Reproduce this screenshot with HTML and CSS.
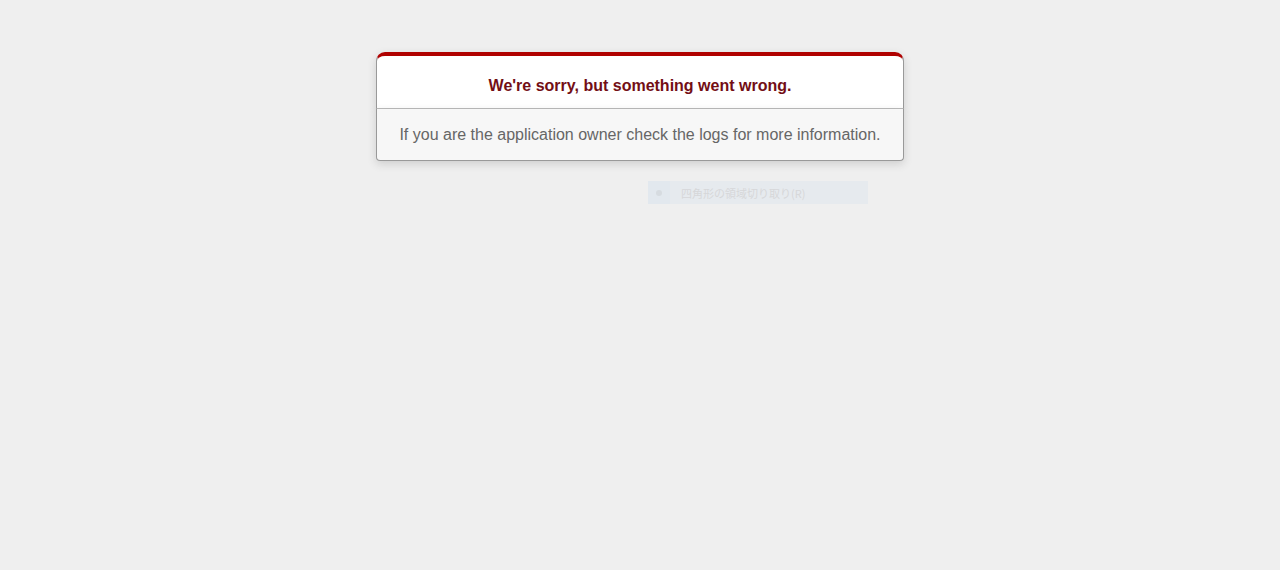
FILE: index.html
```html
<!DOCTYPE html>
<html lang="en">
<head>
<meta charset="utf-8">
<title>We're sorry, but something went wrong (500)</title>
<link rel="stylesheet" href="styles.css">
</head>
<body class="error-page">
  <div class="dialog">
    <div class="dialog-head">
      <h1 class="title">We're sorry, but something went wrong.</h1>
    </div>
    <p class="note">If you are the application owner check the logs for more information.</p>
  </div>
  <div class="ghost-menu">
    <span class="ghost-icon"><span class="ghost-dot"></span></span>
    <span class="ghost-label">四角形の領域切り取り(R)</span>
  </div>
</body>
</html>
```

FILE: styles.css
```css
html, body {
  margin: 0;
  padding: 0;
}

.error-page {
  background-color: #efefef;
  color: #2e2f30;
  text-align: center;
  font-family: "Liberation Sans", Arial, sans-serif;
  font-size: 16px;
  min-height: 570px;
  position: relative;
}

.dialog {
  width: 528px;
  margin: 52px auto 0;
  box-sizing: border-box;
}

.dialog-head {
  border: 1px solid #ccc;
  border-right-color: #999;
  border-left-color: #999;
  border-bottom-color: #bbb;
  border-top: 4px solid #b00100;
  border-top-left-radius: 9px;
  border-top-right-radius: 9px;
  background-color: #fff;
  box-shadow: 0 3px 8px rgba(50, 50, 50, 0.17);
}

.title {
  margin: 0;
  padding: 18px 0 10px;
  font-size: 16px;
  line-height: 24px;
  font-weight: bold;
  color: #730e15;
}

.note {
  margin: 0;
  padding: 16px 10px;
  line-height: 19px;
  background-color: #f7f7f7;
  border: 1px solid #999;
  border-top: none;
  border-bottom-left-radius: 4px;
  border-bottom-right-radius: 4px;
  color: #666;
  box-shadow: 0 3px 8px rgba(50, 50, 50, 0.17);
}

.ghost-menu {
  position: absolute;
  left: 648px;
  top: 181px;
  width: 220px;
  height: 23px;
  background-color: #e6eaee;
  display: flex;
  align-items: center;
  text-align: left;
}

.ghost-icon {
  width: 22px;
  height: 23px;
  background-color: #e2e8ee;
  display: flex;
  align-items: center;
  justify-content: center;
}

.ghost-dot {
  width: 6px;
  height: 6px;
  border-radius: 50%;
  background-color: #d6dbe0;
}

.ghost-label {
  margin-left: 11px;
  font-family: "Noto Sans CJK JP", "Liberation Sans", sans-serif;
  font-size: 11px;
  color: #d6d7d9;
  white-space: nowrap;
}
```
